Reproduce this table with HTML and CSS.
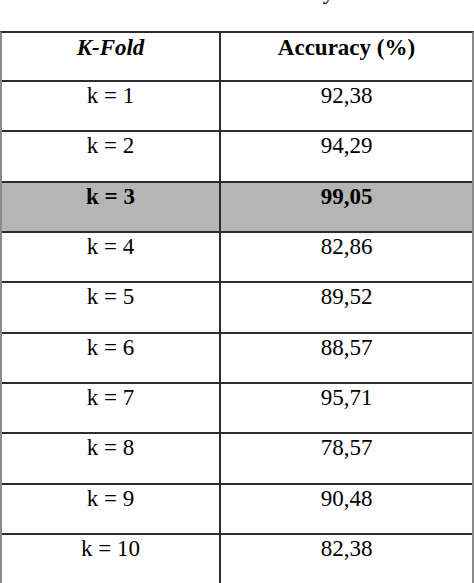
FILE: index.html
```html
<!DOCTYPE html>
<html lang="en">
<head>
<meta charset="utf-8">
<title>K-Fold Accuracy</title>
<link rel="stylesheet" href="styles.css">
</head>
<body>
<div class="caption">Table 3. Accuracy</div>
<div class="table" role="table">
  <div class="cell left head italic" role="columnheader">K-Fold</div>
  <div class="cell head" role="columnheader">Accuracy (%)</div>
  <div class="cell left">k = 1</div><div class="cell">92,38</div>
  <div class="cell left">k = 2</div><div class="cell">94,29</div>
  <div class="cell left best">k = 3</div><div class="cell best">99,05</div>
  <div class="cell left">k = 4</div><div class="cell">82,86</div>
  <div class="cell left">k = 5</div><div class="cell">89,52</div>
  <div class="cell left">k = 6</div><div class="cell">88,57</div>
  <div class="cell left">k = 7</div><div class="cell">95,71</div>
  <div class="cell left">k = 8</div><div class="cell">78,57</div>
  <div class="cell left">k = 9</div><div class="cell">90,48</div>
  <div class="cell left">k = 10</div><div class="cell">82,38</div>
</div>
</body>
</html>
```

FILE: styles.css
```css
html, body {
  margin: 0;
  padding: 0;
  background: #ffffff;
}
body {
  width: 474px;
  height: 583px;
  overflow: hidden;
  font-family: "Liberation Serif", "Times New Roman", serif;
  color: #000000;
}
.caption {
  margin-top: -21px;
  padding-left: 28px;
  font-size: 23px;
  line-height: 26px;
  text-align: center;
}
.table {
  margin-top: 26px;
  width: 474px;
  box-sizing: border-box;
  display: grid;
  grid-template-columns: 219px 1fr;
  grid-template-rows: 49px repeat(10, 50.33px);
  border-top: 2px solid #2c2c2c;
  border-left: 2px solid #8a8a8a;
  border-right: 2px solid #8a8a8a;
}
.cell {
  box-sizing: border-box;
  border-bottom: 2px solid #2c2c2c;
  padding-top: 1px;
  font-size: 23px;
  line-height: 26px;
  text-align: center;
}
.left {
  border-right: 2px solid #2c2c2c;
}
.head {
  font-weight: bold;
  padding-top: 2px;
}
.italic {
  font-style: italic;
}
.best {
  background: #b5b5b5;
  font-weight: bold;
}
```
